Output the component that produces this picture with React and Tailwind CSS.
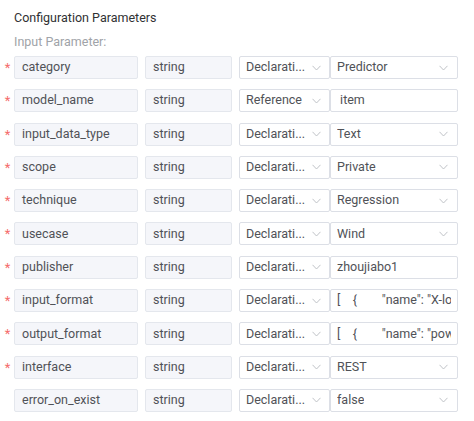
import React from "react";

const rows = [
  { name: "category", req: true, decl: "Declarati...", value: "Predictor", select: true },
  { name: "model_name", req: true, decl: "Reference", value: " item", select: false },
  { name: "input_data_type", req: true, decl: "Declarati...", value: "Text", select: true },
  { name: "scope", req: true, decl: "Declarati...", value: "Private", select: true },
  { name: "technique", req: true, decl: "Declarati...", value: "Regression", select: true },
  { name: "usecase", req: true, decl: "Declarati...", value: "Wind", select: true },
  { name: "publisher", req: true, decl: "Declarati...", value: "zhoujiabo1", select: false },
  { name: "input_format", req: true, decl: "Declarati...", value: '[    {        "name": "X-low', select: false },
  { name: "output_format", req: true, decl: "Declarati...", value: '[    {        "name": "power', select: false },
  { name: "interface", req: true, decl: "Declarati...", value: "REST", select: true },
  { name: "error_on_exist", req: false, decl: "Declarati...", value: "false", select: true },
];

function Chevron() {
  return (
    <svg width="9" height="6" viewBox="0 0 9 6" className="shrink-0">
      <path d="M0.5 0.8 L4.5 5 L8.5 0.8" fill="none" stroke="#b9bcc2" strokeWidth="0.9" />
    </svg>
  );
}

export default function App() {
  return (
    <div
      className="w-[474px] h-[421px] bg-white text-[12.5px] overflow-hidden"
      style={{ fontFamily: 'Roboto, "Noto Sans", sans-serif' }}
    >
      <div className="pl-[14px] pt-[7px] text-[#303133] text-[12.5px] h-[23px] leading-[22px]">Configuration Parameters</div>
      <div className="pl-[14px] mt-[9px] text-[#a0a3a8] text-[12.5px] h-[20px] leading-[20px]">Input Parameter:</div>
      <div className="flex flex-col gap-[10.3px] mt-[4px]">
        {rows.map((r) => (
          <div key={r.name} className="flex items-center h-[23px]">
            <div className="w-[14px] flex justify-center pl-[1px] text-[#f56c6c] text-[13px] leading-none">
              {r.req ? "*" : ""}
            </div>
            <div className="w-[124px] h-[23px] bg-[#f5f6fa] border border-[#e4e7ed] rounded-[2px] px-[7px] flex items-center text-[#505257] whitespace-nowrap overflow-hidden">
              {r.name}
            </div>
            <div className="ml-[7px] w-[87px] h-[23px] bg-[#f5f6fa] border border-[#e4e7ed] rounded-[2px] px-[7px] flex items-center text-[#505257]">
              string
            </div>
            <div className="ml-[7px] w-[91px] h-[23px] bg-white border border-[#dcdfe6] rounded-[2px] pl-[6px] pr-[8px] flex items-center justify-between text-[#505257]">
              <span className="whitespace-nowrap">{r.decl}</span>
              <Chevron />
            </div>
            <div className="w-[128px] h-[23px] bg-white border border-[#dcdfe6] rounded-[2px] pl-[6px] pr-[6px] flex items-center justify-between text-[#505257] overflow-hidden">
              <span className="whitespace-pre overflow-hidden">{r.value}</span>
              {r.select && <span className="pr-[3px] flex"><Chevron /></span>}
            </div>
          </div>
        ))}
      </div>
    </div>
  );
}
